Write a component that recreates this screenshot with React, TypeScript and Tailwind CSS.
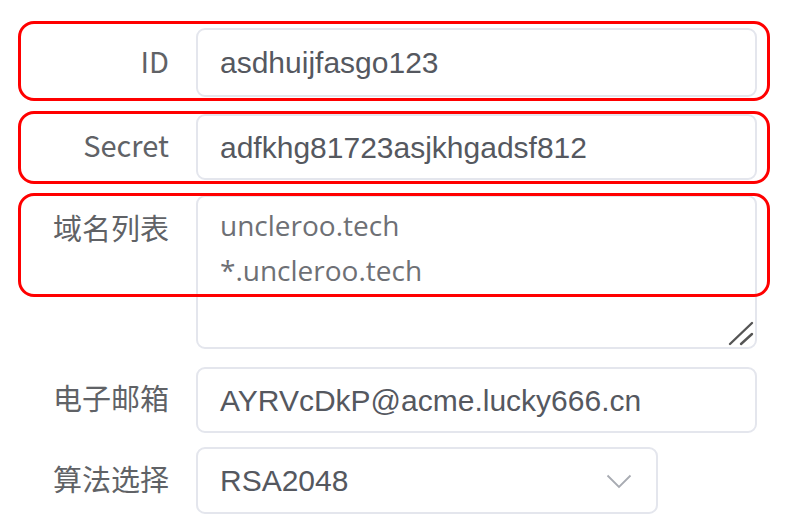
const labelFont = "[font-family:'Noto_Sans_CJK_SC','Noto_Sans',sans-serif]"

interface Field {
  label: string
  value: string
}

const topFields: Field[] = [
  { label: "ID", value: "asdhuijfasgo123" },
  { label: "Secret", value: "adfkhg81723asjkhgadsf812" },
]

function Label({ text, top }: { text: string; top?: boolean }) {
  return (
    <div
      className={`w-[169px] shrink-0 text-right text-[29px] text-[#606266] ${labelFont} ${
        top ? "self-start pt-[10px] leading-[44px]" : "self-center pb-[6px] leading-[40px]"
      }`}
    >
      {text}
    </div>
  )
}

function TextBox({ value }: { value: string }) {
  return (
    <div className="flex h-full w-[561px] items-center rounded-[9px] border-2 border-[#e4e6ed] bg-white pl-[22px] font-['Liberation_Sans',Arial,sans-serif] text-[30px] text-[#55585f]">
      {value}
    </div>
  )
}

export default function App() {
  return (
    <div className="relative h-[530px] w-[806px] overflow-hidden bg-white">
      <div className="flex flex-col pt-[28px]">
        {/* ID / Secret */}
        <div className="flex h-[69px] gap-[27px]">
          <Label text={topFields[0].label} />
          <TextBox value={topFields[0].value} />
        </div>
        <div className="mt-[17px] flex h-[66px] gap-[27px]">
          <Label text={topFields[1].label} />
          <TextBox value={topFields[1].value} />
        </div>

        {/* 域名列表 */}
        <div className="mt-[15px] flex h-[154px] gap-[27px]">
          <Label text="域名列表" top />
          <div className="relative h-full w-[561px] rounded-[9px] border-2 border-[#e4e6ed] bg-white pl-[22px] pt-[6px] font-['Open_Sans','Noto_Sans',sans-serif] text-[28px] leading-[45px] text-[#6e7075]">
            <div>uncleroo.tech</div>
            <div>*.uncleroo.tech</div>
            <svg
              className="absolute bottom-[1px] right-[1px]"
              width="26"
              height="26"
              viewBox="0 0 26 26"
            >
              <path d="M2 24 L24 3 M13 24 L24 14" stroke="#555" strokeWidth="2.4" strokeLinecap="round" />
            </svg>
          </div>
        </div>

        {/* 电子邮箱 */}
        <div className="mt-[18px] flex h-[66px] gap-[27px]">
          <Label text="电子邮箱" />
          <TextBox value="AYRVcDkP@acme.lucky666.cn" />
        </div>

        {/* 算法选择 */}
        <div className="mt-[14px] flex h-[67px] gap-[27px]">
          <Label text="算法选择" />
          <div className="flex h-full w-[462px] items-center justify-between rounded-[9px] border-2 border-[#e4e6ed] bg-white pl-[22px] pr-[24px] font-['Liberation_Sans',Arial,sans-serif] text-[30px] text-[#55585f]">
            <span>RSA2048</span>
            <svg width="26" height="15" viewBox="0 0 26 15" className="mt-[2px]">
              <path d="M1.5 1.5 L13 13 L24.5 1.5" fill="none" stroke="#a8abb2" strokeWidth="1.8" />
            </svg>
          </div>
        </div>
      </div>

      {/* annotation outlines */}
      <div className="pointer-events-none absolute left-[18px] top-[21px] h-[80px] w-[752px] rounded-[16px] border-[3px] border-[#ff0000]" />
      <div className="pointer-events-none absolute left-[18px] top-[111px] h-[73px] w-[752px] rounded-[16px] border-[3px] border-[#ff0000]" />
      <div className="pointer-events-none absolute left-[18px] top-[193px] h-[104px] w-[752px] rounded-[16px] border-[3px] border-[#ff0000]" />
    </div>
  )
}
